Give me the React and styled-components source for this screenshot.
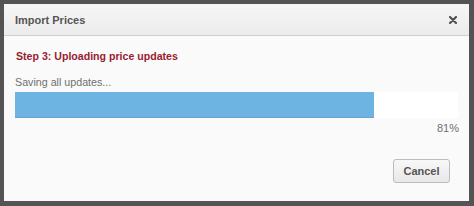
import React from 'react';
import styled, { createGlobalStyle } from 'styled-components';

const GlobalStyle = createGlobalStyle`
  html, body {
    margin: 0;
    padding: 0;
    background: #545454;
  }
  body {
    font-family: "Liberation Sans", Arial, sans-serif;
  }
`;

const Screen = styled.div`
  width: 474px;
  height: 206px;
  padding: 4px 5px 5px 4px;
  box-sizing: border-box;
`;

const Dialog = styled.div`
  width: 465px;
  height: 197px;
  background: #fafafa;
  display: flex;
  flex-direction: column;
  overflow: hidden;
`;

const Header = styled.div`
  height: 32px;
  box-sizing: border-box;
  display: flex;
  align-items: center;
  justify-content: space-between;
  padding: 0 12px 0 11px;
  background: linear-gradient(to bottom, #f6f6f6, #ececec);
  border-bottom: 1px solid #cfcfcf;
`;

const Title = styled.div`
  font-size: 11px;
  font-weight: bold;
  color: #555;
`;

const CloseIcon = () => (
  <svg width="8" height="8" viewBox="0 0 8 8" style={{ display: 'block' }}>
    <path d="M1 1 L7 7 M7 1 L1 7" stroke="#555" strokeWidth="2.3" strokeLinecap="round" />
  </svg>
);

const Body = styled.div`
  flex: 1;
  display: flex;
  flex-direction: column;
  padding: 12px 11px 0 11px;
`;

const StepTitle = styled.div`
  font-size: 10.6px;
  font-weight: bold;
  color: #981c32;
  line-height: 16px;
  padding-left: 1px;
`;

const Label = styled.div`
  margin-top: 11px;
  font-size: 10.7px;
  color: #6f6f6f;
  line-height: 14px;
`;

const Track = styled.div`
  margin-top: 3px;
  width: 443px;
  height: 26px;
  background: #ffffff;
  display: flex;
`;

const Fill = styled.div`
  height: 100%;
  background: #6db4e3;
  box-shadow: inset 0 -1px 0 rgba(0, 0, 0, 0.08);
`;

const Percent = styled.div`
  width: 444px;
  text-align: right;
  margin-top: 3px;
  font-size: 11px;
  color: #6f6f6f;
  line-height: 14px;
`;

const Footer = styled.div`
  display: flex;
  justify-content: flex-end;
  padding: 24px 8px 0 0;
`;

const Button = styled.button`
  width: 57px;
  height: 24px;
  font-family: "Liberation Sans", Arial, sans-serif;
  font-size: 11px;
  font-weight: bold;
  color: #555;
  background: linear-gradient(to bottom, #f8f8f8, #e8e8e8);
  border: 1px solid #bcbcbc;
  border-radius: 3px;
  padding: 0;
`;

export default function App() {
  const progress = 81;
  return (
    <>
      <GlobalStyle />
      <Screen>
        <Dialog>
          <Header>
            <Title>Import Prices</Title>
            <CloseIcon />
          </Header>
          <Body>
            <StepTitle>Step 3: Uploading price updates</StepTitle>
            <Label>Saving all updates...</Label>
            <Track>
              <Fill style={{ width: `${progress}%` }} />
            </Track>
            <Percent>{progress}%</Percent>
            <Footer>
              <Button>Cancel</Button>
            </Footer>
          </Body>
        </Dialog>
      </Screen>
    </>
  );
}
